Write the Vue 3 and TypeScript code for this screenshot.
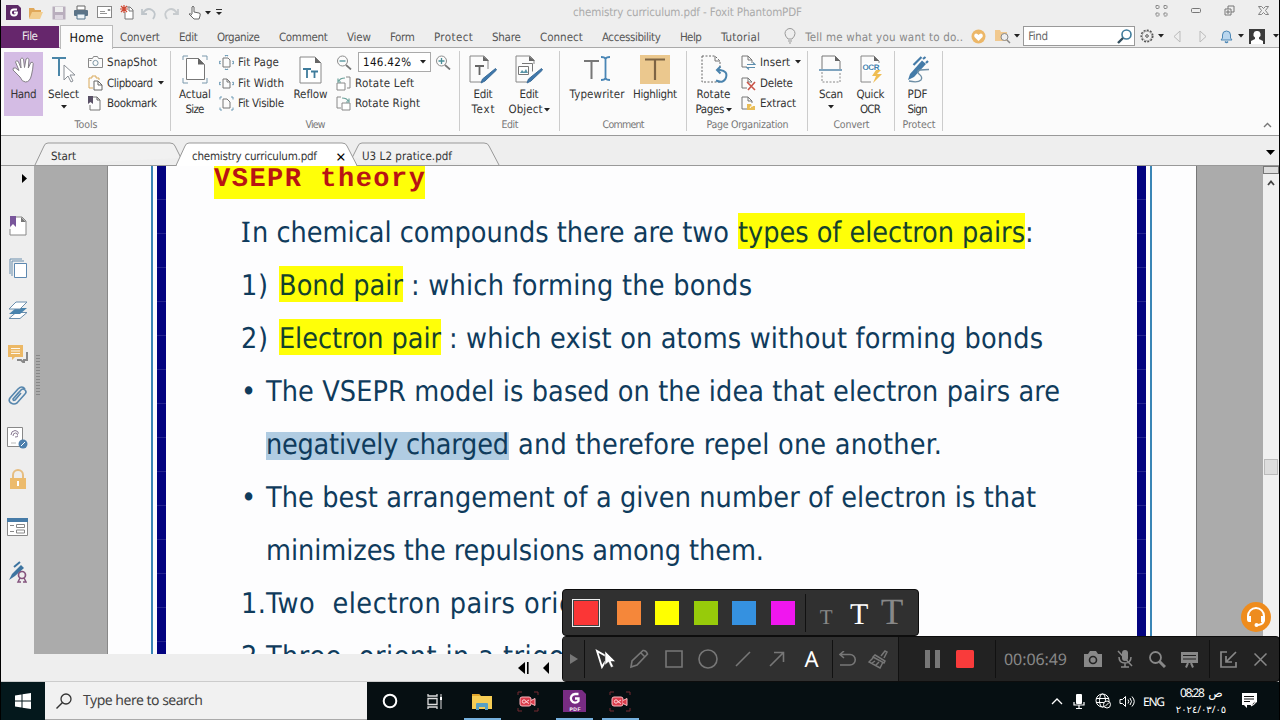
<script setup lang="ts">
import { h } from 'vue'

type IconDef = [number, number, string]

const icons: Record<string, IconDef> = {
  logo: [15, 15, '<path d="M0 0h12l3 3v12H0z" fill="#5d2a66"/><path d="M11 4.500H8a3 3 0 1 0 0 6q3 0 3-3H8" stroke="#fff" stroke-width="1.800"/>'],
  open: [16, 14, '<path d="M1 12V2h5l1 2h6v2" fill="#e0a85a"/><path d="M1 13L4 6h11l-3 7z" fill="#f2cd8e"/>'],
  save: [14, 14, '<path d="M.5.5h13v13H.5z" fill="#b9aebd"/><path d="M3 1h8v5H3z" fill="#eee"/><path d="M3 9h8v4H3z" fill="#ddd6e0"/>'],
  print: [16, 15, '<path d="M4 1h8v4H4z" fill="#fff" stroke="#666"/><rect x="1" y="5" width="14" height="6" rx="1" fill="#5b7387"/><path d="M4 9h8v5H4z" fill="#eef4f8" stroke="#54748c"/>'],
  mail: [16, 13, '<rect x=".5" y=".5" width="14" height="11" fill="#fff" stroke="#888"/><path d="M3 5.500h5M3 7.500h7M11 3.500h2v1h-2z" stroke="#888" stroke-width=".9"/>'],
  newdoc: [14, 15, '<path d="M5 7v7h8V5l-3-3H7" stroke="#777" fill="#fff"/><path d="M9 2v4h4" stroke="#777"/><path d="M4 0v8M0 4h8M1 1l6 6M7 1L1 7" stroke="#d04a35" stroke-width="1.200"/>'],
  undoQ: [15, 14, '<path d="M1 3v5h5M2 7q4-6 9-3t1 9" stroke="#bfc5ca" stroke-width="1.800"/>'],
  redoQ: [15, 14, '<path d="M14 3v5H9M13 7Q9 1 4 4t-1 9" stroke="#c7cbce" stroke-width="1.800"/>'],
  touch: [14, 15, '<path d="M4 9V2q1-1.500 2 0v5l5 1q2 0 1 3l-1 3H6L1 9q1-1 3 1" stroke="#666" fill="#fff"/>'],
  caret: [6, 4, '<path d="M0 0h6L3 3.500z" fill="#222"/>'],
  caretLine: [6, 7, '<path d="M0 .5h6" stroke="#333"/><path d="M0 3h6L3 6z" fill="#222"/>'],
  bigCaret: [9, 5, '<path d="M0 0h9L4.500 5z" fill="#000"/>'],
  bulb: [12, 16, '<path d="M4 11Q1 8 1 5.500a5 5 0 0 1 10 0Q11 8 8 11zM4 13h4M5 15h2" stroke="#999"/>'],
  heart: [15, 15, '<circle cx="7.500" cy="7.500" r="7" fill="#ecb768"/><path d="M7.500 12L3.500 8Q2.500 5 5 4.500q1.500 0 2.500 1.500Q8.500 4.500 10 4.500q2.500.5 1.500 3.500z" fill="#fff"/>'],
  folderFind: [16, 15, '<path d="M0 12V1h5l1 2h6v9z" fill="#f1c98f"/><circle cx="9.500" cy="8" r="3.500" fill="#eee" stroke="#888"/><path d="M12 11l3 3" stroke="#888" stroke-width="1.500"/>'],
  find: [15, 15, '<circle cx="9.500" cy="5.500" r="4.500" stroke="#3f7c9c" stroke-width="1.600"/><path d="M6 9l-5 5" stroke="#35505f" stroke-width="2.400"/>'],
  gear: [14, 14, '<circle cx="7" cy="7" r="5.800" stroke="#555" stroke-width="1.500" stroke-dasharray="2 1.300"/><circle cx="7" cy="7" r="4.800" stroke="#777" stroke-width=".6"/><circle cx="7" cy="7" r="1.300" stroke="#555"/>'],
  prev: [8, 13, '<path d="M7 1v11L1 6.500z" stroke="#bbb"/>'],
  next: [8, 13, '<path d="M1 1v11l6-5.500z" stroke="#bbb"/>'],
  bell: [13, 15, '<path d="M1 11h11l-1.500-2V6a4 4 0 0 0-8 0v3z" fill="#b9d6ee" stroke="#4d87b5"/><path d="M5 12.500q1.500 2 3 0" stroke="#4d87b5" stroke-width="1.300"/>'],
  user: [16, 15, '<path d="M0 0h16v15H0z" fill="#3b3b3b"/><path d="M8 2a3.300 3.500 0 0 1 2 6.500v1.500l4 2v3H2v-3l4-2V8.500A3.300 3.500 0 0 1 8 2z" fill="#fff"/>'],
  fullscreen: [13, 12, '<path d="M1 .5h3v3H1zM9 .5h3v3H9zM1 8h3v3H1zM9 8h3v3H9z" stroke="#888" stroke-dasharray="2.500 .7"/>'],
  min: [10, 5, '<rect x=".5" y=".5" width="9" height="4" rx="1" stroke="#777"/>'],
  restore: [11, 11, '<path d="M1 4h6v6H1zM4 4V1h6v6H7M3 6h2v2H3z" stroke="#777"/>'],
  close: [11, 9, '<path d="M.5.5h3l2 2 2-2h3l-3 4 3 4h-3l-2-2-2 2h-3l3-4z" stroke="#777" stroke-width=".9"/>'],
  hand: [25, 28, '<path d="M9 21L2 14q-.5-3 2.500-2L8 14.500 4.500 6q.8-2.300 2.800-.5L10 12 9.500 3q1.500-2.300 3 0l1 8.500L15 3q1.800-1.800 3 .3L17.300 12l2.500-5.500q2-1 2.400 1Q22 13 20.500 19q-1.500 7-6 7-3.500 0-5.500-5z" fill="#fff" stroke="#858088"/>'],
  select: [25, 28, '<path d="M1 2h14M8 2v18" stroke="#4a86a8" stroke-width="2"/><path d="M13 9v15l4-4 3 6 2-1-3-6h5z" fill="#fff" stroke="#8a8f96"/>'],
  snap: [15, 13, '<path d="M.5 2.500h4l1-2h4l1 2h4v9H.5z" stroke="#888"/><circle cx="7.500" cy="7" r="2.600" stroke="#7d97a5"/><path d="M1.500 4.500h2" stroke="#888"/>'],
  clip: [15, 16, '<path d="M5 13H1V3h3V1h4v2h3v2" stroke="#d9a95b"/><path d="M6 6h4l4 4v5H6z" fill="#fff" stroke="#666"/><path d="M10 6v4h4" stroke="#666"/>'],
  bmark: [13, 15, '<path d="M5 1h4l3 3v10H2V9" stroke="#777"/><path d="M9 1v3h3" stroke="#666"/><path d="M0 0h5v8L2.500 6 0 8z" fill="#595066"/>'],
  actual: [26, 29, '<path d="M4.500 3.500h12l6 6v15h-18z" fill="#fff" stroke="#777"/><path d="M16 3v6.500h6.500z" fill="#666"/><path d="M1 5V1h5M20 1h5v4M1 23v5h5M20 28h5v-5" stroke="#7a99ad"/>'],
  fitPage: [15, 15, '<path d="M4 3h5l2 2v7H4z" stroke="#777"/><path d="M6 1l1.500-1L9 1M6 14l1.500 1L9 14M1.500 6L0 7.500 1.500 9M13.500 6L15 7.500 13.500 9" stroke="#6d9ab5" stroke-width="1.300"/>'],
  fitWidth: [15, 15, '<path d="M4 3h4l3 3v6H4z" stroke="#777"/><path d="M8 3v3h3" stroke="#777"/><path d="M1.500 6L0 7.500 1.500 9M13.500 6L15 7.500 13.500 9" stroke="#6d9ab5" stroke-width="1.300"/>'],
  fitVis: [15, 15, '<path d="M4 3h4l3 3v6H4z" stroke="#777"/><path d="M1 3.500V1h2M12 1h2v2.500M1 11.500V14h2M12 14h2v-2.500" stroke="#6d9ab5"/>'],
  reflow: [23, 28, '<path d="M1 1h15l6 6v20H1z" fill="#fff" stroke="#888"/><path d="M16 1v6h6z" fill="#666"/><path d="M4 13h8M8 13v9M12 15.500h7M15.500 15.500V22" stroke="#3f7c9c" stroke-width="1.800"/>'],
  zoomOut: [16, 15, '<circle cx="6.500" cy="6" r="5" stroke="#8c8c8c"/><path d="M10 10l5 4.500" stroke="#777" stroke-width="1.700"/><path d="M3.500 6h6" stroke="#4b8f98" stroke-width="1.300"/>'],
  zoomIn: [16, 15, '<circle cx="6.500" cy="6" r="5" stroke="#8c8c8c"/><path d="M10 10l5 4.500" stroke="#777" stroke-width="1.700"/><path d="M3.500 6h6M6.500 3v6" stroke="#4b8f98" stroke-width="1.300"/>'],
  rotL: [15, 15, '<path d="M1 7h8v7H1z" fill="#fff" stroke="#888"/><path d="M10 1h4v11h-3" stroke="#888"/><path d="M3 5q1-3 6-3M2 2.500V6h3" stroke="#6aa09a" stroke-width="1.200"/>'],
  rotR: [15, 15, '<path d="M6 7h8v7H6z" fill="#fff" stroke="#888"/><path d="M5 12H1V1h4" stroke="#888"/><path d="M12 5q-1-3-6-3M13 2.500V6h-3" stroke="#6aa09a" stroke-width="1.200"/>'],
  editText: [28, 29, '<path d="M12 27H1V1h14l4 4v9" stroke="#888"/><path d="M14 1v5h6z" fill="#666"/><path d="M6 11h9M10.500 11v9" stroke="#666" stroke-width="1.800"/><path d="M26.500 13.500l1 1.500L16 26l-4 2 1.500-4z" fill="#3d78ad" stroke="#3d6c97"/>'],
  editObj: [28, 29, '<path d="M12 27H1V1h14l4 4v4" stroke="#888"/><path d="M14 1v5h6z" fill="#666"/><path d="M7 8.500h10.500v8" stroke="#777"/><path d="M3.500 11.500h10v8h-10z" fill="#fff" stroke="#777"/><path d="M5 18l2-3 2 2 2-3 2 4z" fill="#5b96a8"/><path d="M26.500 13.500l1 1.500L16 26l-4 2 1.500-4z" fill="#3d78ad" stroke="#3d6c97"/>'],
  typew: [27, 27, '<path d="M0 5h15M7.500 5v18" stroke="#777" stroke-width="2"/><path d="M17 1q4 0 4.500 2Q22 1 26 1M21.500 2v21M17 24q4 0 4.500-2 .5 2 4.500 2" stroke="#4a86b5" stroke-width="1.800"/>'],
  high: [30, 29, '<path d="M0 0h30v29H0z" fill="#ebc88e"/><path d="M5 4.500h20M15 4.500V25" stroke="#7d6444" stroke-width="2.200"/>'],
  rotPages: [28, 29, '<path d="M2 1h13l5 5v6M2 1v26h18" stroke="#666" stroke-dasharray="2 1.500"/><path d="M15 1v5h5" stroke="#777"/><path d="M16 25.500q8 3.500 10-3t-6-7.500h-3M20.500 11.500L17 15l3.500 3.500" stroke="#4a83ad" stroke-width="2"/>'],
  insert: [15, 15, '<path d="M6 12H1V1h6l4 4v3M7 1v4h4" stroke="#777"/><path d="M6 9.500h8l-2-2M14 12.500H6l2 2" stroke="#5d8eae" stroke-width="1.200"/>'],
  del: [15, 15, '<path d="M6 12H1V2h6l4 4M7 2v4h4" stroke="#777"/><path d="M6 6l8 8M14 6l-7 8" stroke="#c95448" stroke-width="1.600"/>'],
  extract: [15, 15, '<path d="M6 13H1V1h6l4 4v2M7 1v4h4" stroke="#777"/><path d="M6 14V8h4l1 2h3v4z" fill="#e9bd57"/><path d="M9 12q1-3 3-2" stroke="#fff"/>'],
  scan: [24, 29, '<path d="M3 14V1h13l5 5v8" stroke="#777"/><path d="M16 1v5h5z" fill="#666"/><path d="M0 15h23" stroke="#4a7fa5" stroke-width="1.400"/><path d="M3 17v10h18V17" stroke="#888" stroke-dasharray="2 1.500"/>'],
  ocr: [24, 29, '<path d="M12 27H2V1h13l5 5v8" stroke="#888"/><path d="M15 1v5h5z" fill="#666"/><rect x="3" y="8" width="18" height="8" fill="#fff"/><text x="3.500" y="15" font-family="Liberation Sans, sans-serif" font-weight="bold" font-size="8" fill="#3f7fae" textLength="17">OCR</text><path d="M17 15l-4 6h4l-3 7 9-9h-5l4-4z" fill="#efbd52"/>'],
  sign: [26, 29, '<path d="M17 5.500l4 3.500L9 22l-6 3 2-6z" fill="#447ba8"/><path d="M8.500 10l8-8M18 4l2.500-2M21 8l2-2" stroke="#447ba8" stroke-width="2.200"/><path d="M4 26q9 2 12-1 2-3-2-6-3-3 1-4 4-.500 9-.500" stroke="#6d8ea5" stroke-width="1.300"/>'],
  collapse: [9, 6, '<path d="M1 5l3.500-3.500L8 5" stroke="#777" stroke-width="1.400"/>'],
  play: [5, 9, '<path d="M0 0v9l5-4.500z" fill="#000"/>'],
  sBook: [18, 20, '<path d="M7 1h6l4 4v14H1v-6" fill="#fff" stroke="#888"/><path d="M12 1v5h5z" fill="#777"/><path d="M1 0h6v11l-3-3-3 3z" fill="#79569b"/>'],
  sPages: [18, 20, '<path d="M1 16V1h12M3 18V3h12" stroke="#6b8fae"/><path d="M5.500 5.500h12v14h-12z" fill="#fff" stroke="#5d88b0"/>'],
  sLayers: [22, 19, '<path d="M2 17.500h11l7-6H9z" fill="#fff" stroke="#6b8fae"/><path d="M2 13h11l7-6H9z" fill="#4983ad"/><path d="M2 8h11l7-7H9z" fill="#fff" stroke="#6b8fae"/>'],
  sChat: [20, 19, '<path d="M19 8v8h-3v3l-3-3H9" stroke="#888" stroke-width="2"/><path d="M0 1h15v12H7l-3 3v-3H0z" fill="#ecb865"/><path d="M3 4.500h9M3 7h9M3 9.500h9" stroke="#fff" stroke-width=".9"/>'],
  sClip: [20, 20, '<path d="M6 13l7-8q2-2 4 0t0 4l-8 9q-3 2-6 0t-1-5l8-9q4-4 7 0M13 8l-6 7q-2 1-2-1l6-7" stroke="#5686ad" stroke-width="1.600"/>'],
  sSig: [21, 22, '<path d="M.5.5h15v19H.5z" fill="#fff" stroke="#888"/><path d="M4 8q0-4 4-4.500 3.500.500 3.500 3M6 9q0-3 2.500-3t2 2.500M8 10q3 0 3-1" stroke="#8a7b94"/><path d="M4 16h5" stroke="#bbb"/><circle cx="16" cy="17" r="4.500" fill="#4c7fad"/><path d="M14 19l4-4" stroke="#fff"/>'],
  sLock: [18, 21, '<path d="M4 10V6a5 5 0 0 1 10 0v4" stroke="#e6bd80" stroke-width="2"/><path d="M1 9h16v11H1z" fill="#ecbb6d"/><path d="M9 12v5" stroke="#fff" stroke-width="2"/>'],
  sForm: [21, 18, '<path d="M.5.5h20v17H.5z" fill="#fff" stroke="#888"/><path d="M0 0h21v4H0z" fill="#467ba7"/><path d="M3 7.500h4M3 13.500h4M9.500 6.500h8v3h-8zM9.500 12h8v3h-8z" stroke="#888"/>'],
  sSign: [19, 22, '<path d="M1 19l3-6 9-9 3 3-9 8z" fill="#3d74a0"/><path d="M6 6l6-5" stroke="#3d74a0" stroke-width="2"/><circle cx="14" cy="14" r="3.500" stroke="#84547d" stroke-width="1.700"/><path d="M12 17l-2 4h3M16 17l2 4h-3" stroke="#84547d" stroke-width="1.500"/>'],
  up: [8, 6, '<path d="M1 5l3-3.500L7 5" stroke="#444" stroke-width="1.800"/>'],
  first: [11, 12, '<path d="M7 0v12L0 6z" fill="#000"/><path d="M9.800 0v12" stroke="#000" stroke-width="1.600"/>'],
  back: [6, 12, '<path d="M6 0v12L0 6z" fill="#000"/>'],
  headset: [30, 30, '<circle cx="15" cy="15" r="15" fill="#ee8c1e"/><path d="M7 18v-4a8 8 0 0 1 16 0v4q0 4-6 5" stroke="#fff" stroke-width="2"/><path d="M6 14h4v6H8q-2 0-2-3zM20 14h4v3q0 3-2 3h-2z" fill="#fff"/><circle cx="15.500" cy="23" r="2" fill="#fff"/>'],
  rPlay: [8, 10, '<path d="M0 0v10l8-5z" fill="#777"/>'],
  rCursor: [20, 20, '<path d="M2 2l5 16 3-5 6-3z" stroke="#fff" stroke-width="1.800"/><path d="M10 2v14l3.500-3 2.500 5.500 2.500-1L16 12.500h4.500z" fill="#fff" stroke="#333" stroke-width=".5"/>'],
  rPencil: [22, 20, '<path d="M2 18l1-6L14 1.500q3-.5 4.500 3.500L8 16zM12 4l4 4" stroke="#777" stroke-width="1.600"/>'],
  rRect: [18, 18, '<path d="M1 1h16v16H1z" stroke="#777" stroke-width="1.600"/>'],
  rCircle: [20, 20, '<circle cx="10" cy="10" r="9" stroke="#777" stroke-width="1.600"/>'],
  rLine: [16, 16, '<path d="M1 15L15 1" stroke="#777" stroke-width="1.600"/>'],
  rArrow: [16, 16, '<path d="M1 15L14.500 1.500M5 1.500h9.500V11" stroke="#777" stroke-width="1.600"/>'],
  rUndo: [18, 16, '<path d="M5 0L1 3.500 5 7M1 3.500h10a5 5 0 0 1 0 10.500H1" stroke="#777" stroke-width="1.600"/>'],
  rBrush: [20, 19, '<path d="M13 6l4-5 2 1-3 6M7 5l10 6-1 2L5 7zM5 8l-4 4 11 6 3-6M4 13l3-2M8 15l3-3" stroke="#777" stroke-width="1.500"/>'],
  rPause: [16, 18, '<path d="M0 0h5v18H0zM10 0h5v18h-5z" fill="#777"/>'],
  rStop: [18, 18, '<rect width="18" height="18" rx="1.500" fill="#f93b3b"/>'],
  rCam: [18, 16, '<path d="M0 3h4l2-3h6l2 3h4v13H0z" fill="#888"/><circle cx="9" cy="9" r="3.500" stroke="#222" stroke-width="1.600"/>'],
  rMic: [16, 18, '<rect x="5" y="0" width="6" height="11" rx="3" fill="#888"/><path d="M2 7q0 6 6 6t6-6M8 13v4M4 17h8M1 1l14 15" stroke="#888" stroke-width="1.500"/>'],
  rFind: [17, 17, '<circle cx="6.500" cy="6.500" r="5.500" stroke="#888" stroke-width="1.800"/><path d="M10 10l6 6" stroke="#888" stroke-width="3"/>'],
  rBoard: [17, 17, '<path d="M0 1h17v11H0z" fill="#888"/><path d="M2 4.500h13M2 8h13" stroke="#222" stroke-width="1.200"/><path d="M5 16.500l2-4.500M12 16.500L10 12" stroke="#888" stroke-width="2"/>'],
  rExport: [17, 17, '<path d="M7 1H1v15h15v-5M16 1L6.500 10.500M6 5v6h6" stroke="#888" stroke-width="1.700"/>'],
  rClose: [13, 13, '<path d="M.5.500l12 12M12.500.5l-12 12" stroke="#888" stroke-width="1.500"/>'],
  win: [16, 16, '<path d="M0 2.500l6.500-1v6H0zM7.500 1.300L16 0v7.500H7.500zM0 8.500h6.500v6l-6.500-1zM7.500 8.500H16V16l-8.500-1.300z" fill="#fff"/>'],
  search: [16, 16, '<circle cx="10" cy="6" r="5" stroke="#333" stroke-width="1.300"/><path d="M6.500 9.500L.5 15.500" stroke="#333" stroke-width="1.400"/>'],
  cortana: [16, 16, '<circle cx="8" cy="8" r="6.300" stroke="#fff" stroke-width="2"/>'],
  taskview: [16, 15, '<path d="M1 0v2h9V0M1 15v-2h9v2M1 4.500h9v6H1z" stroke="#ddd" stroke-width="1.300"/><path d="M14 0v15" stroke="#ddd"/><path d="M13 3h2v3h-2z" fill="#fff"/>'],
  folder: [20, 17, '<path d="M0 1h7l2 2h11v13H0z" fill="#f6cd55"/><path d="M0 1h7l1 2H0z" fill="#e0a52c"/><path d="M4 17v-6q0-1 1-1h10q1 0 1 1v6h-3v-3H7v3z" fill="#58a0c4"/>'],
  rec: [22, 21, '<path d="M1 4V1h4M17 1h4v3M1 17v3h4M17 20h4v-3" stroke="#742a31"/><rect x="3" y="6" width="11" height="9" rx="2" fill="#d93d4c" stroke="#ffb9bf"/><path d="M14 9.500l4-2v7l-4-2" fill="#d93d4c" stroke="#ffb9bf"/><circle cx="7" cy="10.500" r="1.700" stroke="#ffd5d8"/><path d="M12 9l-3 1.800 3 1.700" stroke="#ffd5d8"/>'],
  foxit: [23, 22, '<path d="M0 0h19l4 4v18H0z" fill="#782c83"/><path d="M15.500 4h-3.500a4.300 4.300 0 1 0 3.500 7V8.500H12" stroke="#fff" stroke-width="2.300"/><text x="6.500" y="20.500" font-family="Liberation Sans, sans-serif" font-weight="bold" font-size="5" fill="#fff" textLength="11">PDF</text>'],
  tUp: [12, 7, '<path d="M1 6l5-5 5 5" stroke="#fff" stroke-width="1.300"/>'],
  tMic: [12, 15, '<rect x="3" y="0" width="6" height="10" rx="1" fill="#fff"/><path d="M1 8v3h10V8M6 11v3M3 14.500h6" stroke="#fff" stroke-width="1.200"/>'],
  tGlobe: [17, 16, '<circle cx="7.500" cy="7.500" r="6.500" stroke="#fff"/><ellipse cx="7.500" cy="7.500" rx="3" ry="6.500" stroke="#fff"/><path d="M1 5.500h13M1 9.500h13" stroke="#fff"/><circle cx="12" cy="11.500" r="3.500" fill="#091012" stroke="#fff"/><path d="M10 13.500l4-4" stroke="#fff"/>'],
  tVol: [16, 13, '<path d="M1 4.500h2.500l3-3v10l-3-3H1z" stroke="#fff"/><path d="M9 4.500q1.500 2 0 4M11 3q3 3.500 0 7M13 1.500q4.500 5 0 10" stroke="#fff"/>'],
  tNote: [17, 16, '<path d="M1 0h15v9l-4 3H6v3l-3-3H1z" fill="#fff"/><path d="M3 3.500h10M3 6h10M3 8.500h6" stroke="#111"/><path d="M10 13q2-4 5-5-1 4-5 5" stroke="#fff" fill="#111"/>'],
}

const Icon = (p: { name: string }) => {
  const [w, ht, body] = icons[p.name]
  return h('svg', { width: w, height: ht, viewBox: `0 0 ${w} ${ht}`, fill: 'none', innerHTML: body })
}
Icon.props = ['name']

/* Tracks a label so that it spans the given width. */
const vFit = {
  mounted(el: HTMLElement, { value }: { value: number }) {
    const n = (el.textContent ?? '').length
    const natural = el.getBoundingClientRect().width
    if (n > 1) el.style.letterSpacing = `${(value - natural) / (n - 1)}px`
    el.style.width = `${value}px`
  },
}

type Label = [string, number]
interface Big { icon: string; w: number; lines: Label[]; caret?: 'below' | 'after'; on?: boolean }
interface Small { icon: string; label: Label; caret?: boolean }

const menu: Label[] = [
  ['Convert', 40], ['Edit', 19], ['Organize', 43], ['Comment', 49], ['View', 24], ['Form', 25],
  ['Protect', 39], ['Share', 29], ['Connect', 43], ['Accessibility', 59], ['Help', 22], ['Tutorial', 39],
]
const quick = ['logo', 'open', 'save', 'print', 'mail', 'newdoc', 'undoQ', 'redoQ']

const hand: Big = { icon: 'hand', w: 39, lines: [['Hand', 26]], on: true }
const select: Big = { icon: 'select', w: 41, lines: [['Select', 31]], caret: 'below' }
const tools: Small[] = [
  { icon: 'snap', label: ['SnapShot', 50] },
  { icon: 'clip', label: ['Clipboard', 46], caret: true },
  { icon: 'bmark', label: ['Bookmark', 50] },
]
const actual: Big = { icon: 'actual', w: 40, lines: [['Actual', 32], ['Size', 19]] }
const fits: Small[] = [
  { icon: 'fitPage', label: ['Fit Page', 41] },
  { icon: 'fitWidth', label: ['Fit Width', 46] },
  { icon: 'fitVis', label: ['Fit Visible', 46] },
]
const reflow: Big = { icon: 'reflow', w: 41, lines: [['Reflow', 34]] }
const rotates: Small[] = [
  { icon: 'rotL', label: ['Rotate Left', 59] },
  { icon: 'rotR', label: ['Rotate Right', 65] },
]
const edits: Big[] = [
  { icon: 'editText', w: 46, lines: [['Edit', 19], ['Text', 23]] },
  { icon: 'editObj', w: 46, lines: [['Edit', 19], ['Object', 34]], caret: 'after' },
]
const comments: Big[] = [
  { icon: 'typew', w: 62, lines: [['Typewriter', 55]] },
  { icon: 'high', w: 54, lines: [['Highlight', 44]] },
]
const rotPages: Big = { icon: 'rotPages', w: 41, lines: [['Rotate', 34], ['Pages', 29]], caret: 'after' }
const pageOps: Small[] = [
  { icon: 'insert', label: ['Insert', 30], caret: true },
  { icon: 'del', label: ['Delete', 33] },
  { icon: 'extract', label: ['Extract', 36] },
]
const converts: Big[] = [
  { icon: 'scan', w: 40, lines: [['Scan', 24]], caret: 'below' },
  { icon: 'ocr', w: 39, lines: [['Quick', 28], ['OCR', 21]] },
]
const signs: Big[] = [{ icon: 'sign', w: 45, lines: [['PDF', 20], ['Sign', 20]] }]

interface Group { name: Label; w: number; pad: number; parts: (Big | Small[] | 'zoom')[] }
const groups: Group[] = [
  { name: ['Tools', 23], w: 170, pad: 3, parts: [hand, select, tools] },
  { name: ['View', 20], w: 289, pad: 4, parts: [actual, fits, reflow, 'zoom'] },
  { name: ['Edit', 17], w: 100, pad: 0, parts: edits },
  { name: ['Comment', 42], w: 127, pad: 6, parts: comments },
  { name: ['Page Organization', 82], w: 121, pad: 6, parts: [rotPages, pageOps] },
  { name: ['Convert', 36], w: 87, pad: 3, parts: converts },
  { name: ['Protect', 33], w: 48, pad: 0, parts: signs },
]
const isBig = (p: Big | Small[] | 'zoom'): p is Big => typeof p === 'object' && !Array.isArray(p)

const side = ['sBook', 'sPages', 'sLayers', 'sChat', 'sClip', 'sSig', 'sLock', 'sForm', 'sSign']

type Seg = { t: string; w: number; gap?: number; mark?: 'hl' | 'sel' | 'slab' }
const lines: Seg[][] = [
  [{ t: 'I', w: 11, mark: 'slab' }, { t: 'n chemical compounds there are two', w: 477 }, { t: 'types of electron pairs', w: 287, gap: 9, mark: 'hl' }, { t: ':', w: 9 }],
  [{ t: '1)', w: 27 }, { t: 'Bond pair', w: 124, gap: 11, mark: 'hl' }, { t: ': which forming the bonds', w: 341, gap: 8 }],
  [{ t: '2)', w: 27 }, { t: 'Electron pair', w: 162, gap: 11, mark: 'hl' }, { t: ': which exist on atoms without forming bonds', w: 594, gap: 8 }],
  [{ t: '•', w: 13 }, { t: 'The VSEPR model is based on the idea that electron pairs are', w: 794, gap: 12 }],
  [{ t: 'negatively charged', w: 243, gap: 25, mark: 'sel' }, { t: 'and therefore repel one another.', w: 424, gap: 9 }],
  [{ t: '•', w: 13 }, { t: 'The best arrangement of a given number of electron is that', w: 770, gap: 12 }],
  [{ t: 'minimizes the repulsions among them.', w: 498, gap: 25 }],
  [{ t: '1.', w: 25 }, { t: 'Two  electron pairs orient', w: 336 }],
  [{ t: '2.', w: 25 }, { t: 'Three  orient in a trigonal', w: 339 }],
]

const swatches = ['orange', 'yellow', 'green', 'blue', 'magenta']
const draw = ['rCursor', 'rPencil', 'rRect', 'rCircle', 'rLine', 'rArrow']
const apps = [['folder', true], ['rec', false], ['foxit', true], ['rec', true]] as [string, boolean][]
</script>

<template>
  <div class="screen">
    <header class="title">
      <div class="quick">
        <Icon v-for="q in quick" :key="q" :name="q" />
        <Icon name="touch" class="touch" /><Icon name="caret" class="c1" /><Icon name="caretLine" class="c2" />
      </div>
      <span v-fit="229" class="caption">chemistry curriculum.pdf - Foxit PhantomPDF</span>
      <div class="winbtns"><Icon name="fullscreen" /><Icon name="min" /><Icon name="restore" /><Icon name="close" /></div>
    </header>

    <nav class="menu">
      <div class="file"><span v-fit="16">File</span></div>
      <div class="home"><span v-fit="34">Home</span></div>
      <div class="items"><span v-for="m in menu" :key="m[0]" v-fit="m[1]">{{ m[0] }}</span></div>
      <Icon name="bulb" class="bulb" />
      <span v-fit="158" class="tell">Tell me what you want to do..</span>
      <Icon name="heart" class="heart" /><Icon name="folderFind" class="ff" /><Icon name="caret" class="fc" />
      <div class="find"><span v-fit="20">Find</span><Icon name="find" /></div>
      <Icon name="gear" class="gear" /><Icon name="caret" class="gc" />
      <Icon name="prev" class="prev" /><Icon name="next" class="next" />
      <Icon name="bell" class="bell" /><Icon name="caret" class="bc" />
      <Icon name="user" class="user" /><Icon name="caret" class="uc" />
    </nav>

    <section class="ribbon">
      <div v-for="g in groups" :key="g.name[0]" class="group" :style="{ width: g.w + 'px' }">
        <div class="parts" :style="{ paddingLeft: g.pad + 'px' }">
          <template v-for="(p, i) in g.parts" :key="i">
            <div v-if="isBig(p)" class="big" :class="{ on: p.on }" :style="{ width: p.w + 'px' }">
              <div class="pic"><Icon :name="p.icon" /></div>
              <div v-for="(l, k) in p.lines" :key="k" class="ln">
                <span v-fit="l[1]">{{ l[0] }}</span><Icon v-if="p.caret === 'after' && k === 1" name="caret" />
              </div>
              <Icon v-if="p.caret === 'below'" name="caret" class="below" />
            </div>
            <div v-else-if="p === 'zoom'" class="stack zoom">
              <div class="row">
                <Icon name="zoomOut" />
                <div class="pct"><span v-fit="48">146.42%</span><Icon name="caret" /></div>
                <Icon name="zoomIn" />
              </div>
              <div v-for="s in rotates" :key="s.icon" class="row"><div class="si"><Icon :name="s.icon" /></div><span v-fit="s.label[1]">{{ s.label[0] }}</span></div>
            </div>
            <div v-else class="stack" :class="{ wide: p === fits, ops: p === pageOps }">
              <div v-for="s in p" :key="s.icon" class="row">
                <div class="si"><Icon :name="s.icon" /></div>
                <span v-fit="s.label[1]">{{ s.label[0] }}</span>
                <Icon v-if="s.caret" name="caret" class="rc" />
              </div>
            </div>
          </template>
        </div>
        <div class="gname"><span v-fit="g.name[1]">{{ g.name[0] }}</span></div>
      </div>
      <Icon name="collapse" class="collapse" />
    </section>

    <div class="tabs">
      <svg class="shapes" width="1278" height="30" fill="none" stroke="#999">
        <path d="M34 29L43 10q1-3 4-3h122q4 0 5 3l6 12" fill="#f1f1f1" />
        <path d="M351 22l6-12q1-3 4-3h122q4 0 5 3l10 19" fill="#f1f1f1" />
        <path d="M0 29.500h1278" />
        <path d="M175 29.500L184 10q1-3 4-3h153q4 0 5 3l10 19.500" fill="#fff" />
        <path d="M176 29.500h179" stroke="#fff" />
      </svg>
      <span v-fit="25" class="t1">Start</span>
      <span v-fit="125" class="t2">chemistry curriculum.pdf</span>
      <span class="tx">×</span>
      <span v-fit="90" class="t3">U3 L2 pratice.pdf</span>
      <Icon name="bigCaret" class="tc" />
    </div>

    <main class="body">
      <aside class="side">
        <Icon name="play" class="play" />
        <div v-for="s in side" :key="s" class="scell"><Icon :name="s" /></div>
      </aside>
      <div class="gutter"><div class="grip"></div></div>
      <article class="sheet">
        <div class="thin left"></div><div class="thick"></div>
        <div class="content">
          <h1><span v-fit="211">VSEPR theory</span></h1>
          <p v-for="(l, i) in lines" :key="i">
            <span v-for="(s, k) in l" :key="k" v-fit="s.w" :class="s.mark" :style="{ marginLeft: (s.gap ?? 0) + 'px' }">{{ s.t }}</span>
          </p>
        </div>
        <div class="thick"></div><div class="thin right"></div>
      </article>
      <div class="rest"></div>
      <div class="scroll"><div class="split"></div><Icon name="up" /><div class="thumb"></div></div>
    </main>

    <footer class="status"><Icon name="first" /><Icon name="back" /></footer>

    <div class="taskbar">
      <div class="start"><Icon name="win" /></div>
      <div class="tsearch"><Icon name="search" /><span v-fit="120">Type here to search</span></div>
      <div class="app sm"><Icon name="cortana" /></div>
      <div class="app sm"><Icon name="taskview" /></div>
      <div class="running"><div v-for="(a, i) in apps" :key="i" class="app" :class="{ run: a[1] }"><Icon :name="a[0]" /></div></div>
      <div class="tray">
        <Icon name="tUp" /><Icon name="tMic" /><Icon name="tGlobe" /><Icon name="tVol" />
        <span v-fit="22" class="eng">ENG</span>
        <div class="clock"><div class="time"><span v-fit="25">08:28</span><span>ص</span></div><div class="date">٢٠٢٤/٠٣/٠٥</div></div>
        <Icon name="tNote" />
      </div>
    </div>

    <div class="help"><Icon name="headset" /></div>

    <div class="palette">
      <div class="sw red"></div>
      <div v-for="s in swatches" :key="s" class="sw" :class="s"></div>
      <i class="div"></i>
      <span class="ts s">T</span><span class="ts m">T</span><span class="ts l">T</span>
    </div>
    <div class="recorder">
      <div class="rleft">
        <div class="rp"><Icon name="rPlay" /></div><i class="div"></i>
        <div class="rtools">
          <div v-for="d in draw" :key="d" class="rcell"><Icon :name="d" /></div>
          <div class="rcell letter">A</div>
        </div>
        <i class="div"></i>
        <div class="rsm"><Icon name="rUndo" /></div><div class="rsm"><Icon name="rBrush" /></div>
      </div>
      <div class="rright">
        <div class="r32"><Icon name="rPause" /></div><div class="r32"><Icon name="rStop" /></div>
        <i class="div d1"></i>
        <span v-fit="63" class="timer">00:06:49</span>
        <div v-for="n in ['rCam', 'rMic', 'rFind', 'rBoard']" :key="n" class="r32"><Icon :name="n" /></div>
        <i class="div d2"></i>
        <div class="r32"><Icon name="rExport" /></div><div class="r32"><Icon name="rClose" /></div>
      </div>
    </div>
  </div>
</template>

<style>
html, body { margin: 0; background: #000; overflow: hidden; }
</style>

<style scoped>
.screen {
  position: relative; box-sizing: border-box; width: 1280px; height: 720px; overflow: hidden;
  border: solid #000; border-width: 0 1px; background: #eee; color: #333;
  font: 11.500px/15px "DejaVu Sans Condensed", "Noto Sans", sans-serif; text-rendering: geometricPrecision;
  display: flex; flex-direction: column;
}
.screen span { white-space: pre; display: inline-block; flex: none; }
svg { display: block; flex: none; }

.title { height: 25px; display: flex; align-items: center; flex: none; }
.quick { display: flex; align-items: center; gap: 7.400px; padding-left: 5px; width: 566px; }
.quick .touch { margin-left: 2px; }
.quick .c1 { margin-left: -5px; }
.quick .c2 { margin-left: -2px; }
.caption { color: #aaa; margin-left: 1px; }
.winbtns { margin-left: auto; display: flex; align-items: center; gap: 23px; padding: 0 10px 4px 0; }

.menu { height: 22px; flex: none; display: flex; align-items: center; border-bottom: 1px solid #aaa; color: #555; }
.file { width: 58px; height: 22px; margin-top: 1px; background: #66266c; color: #eee; display: flex; align-items: center; justify-content: center; }
.home { box-sizing: border-box; width: 53px; height: 24px; margin: 1px 0 0 1px; background: #fbfbfb; border: 1px solid #bbb; border-bottom: 0; color: #111; font-size: 12.500px; display: flex; align-items: center; justify-content: center; position: relative; z-index: 1; }
.items { display: flex; gap: 19px; margin-left: 7px; width: 664px; padding-top: 2px; }
.bulb { margin-left: 1px; }
.tell { margin: 2px 0 0 9px; color: #888; }
.heart { margin-left: 8px; }
.ff { margin-left: 9px; }
.fc { margin-left: 3px; }
.find { box-sizing: border-box; width: 112px; height: 20px; margin-left: 3px; background: #fff; border: 1px solid #999; padding: 0 2px 0 4px; display: flex; justify-content: space-between; align-items: center; color: #666; }
.gear { margin-left: 5px; }
.gc { margin-left: 4px; }
.prev { margin-left: 9px; }
.next { margin-left: 18px; }
.bell { margin-left: 13px; }
.bc { margin-left: 5px; }
.user { margin-left: 5px; }
.uc { margin-left: 8px; }

.ribbon { position: relative; height: 87px; flex: none; display: flex; background: #fbfbfb; border-bottom: 1px solid #999; }
.group { position: relative; box-sizing: border-box; height: 87px; padding-top: 4px; flex: none; }
.group::after { content: ""; position: absolute; right: 0; top: 3px; bottom: 4px; width: 1px; background: #ccc; }
.parts { display: flex; height: 66px; align-items: flex-start; }
.big { height: 64px; display: flex; flex-direction: column; align-items: center; flex: none; }
.big.on { background: #d4bce4; }
.pic { height: 35px; display: flex; align-items: center; justify-content: center; flex: none; }
.ln { height: 15px; display: flex; align-items: center; justify-content: center; gap: 1px; }
.below { margin-top: 3px; }
.stack { margin-left: 4px; display: flex; flex-direction: column; }
.stack.wide { width: 71px; margin-left: 4px; }
.stack.ops { margin-left: 7px; }
.stack.zoom { margin-left: 5px; }
.row { height: 20.800px; display: flex; align-items: center; }
.si { width: 19px; flex: none; }
.stack.ops .si { width: 19px; }
.rc { margin-left: 5px; }
.zoom .row:first-child svg:last-child { margin-left: 4px; }
.pct { box-sizing: border-box; width: 73px; height: 20px; margin-left: 6px; border: 1px solid #aaa; background: #fff; display: flex; align-items: center; justify-content: space-between; padding: 0 4px; color: #111; }
.pct svg, .zoom .row:first-child .pct svg { margin: 0; }
.gname { display: flex; justify-content: center; color: #777; font-size: 10.500px; }
.collapse { position: absolute; right: 7px; bottom: 7px; }

.tabs { position: relative; height: 30px; flex: none; display: flex; align-items: center; }
.tabs > span, .tabs > .tc { position: relative; top: 5px; }
.shapes { position: absolute; left: 0; top: 0; }
.t1 { margin-left: 50px; }
.t2 { margin-left: 116px; }
.tx { width: 12px; margin-left: 19px; font: 17px/15px "Noto Sans", sans-serif; color: #000; }
.t3 { margin-left: 14px; }
.tabs > .tc { margin-left: auto; margin-right: 4px; top: 1px; }

.body { height: 488px; flex: none; display: flex; overflow: hidden; }
.side { width: 33px; display: flex; flex-direction: column; align-items: center; }
.play { margin: 8px 0 22px 13px; flex: none; }
.scell { height: 42.300px; width: 33px; display: flex; align-items: center; justify-content: center; flex: none; }
.scell:nth-last-child(2) { margin-top: 5px; }
.scell:last-child { margin-top: 2px; }
.gutter { box-sizing: border-box; width: 74px; background: #ababab; border-right: 1px solid #888; padding: 189px 0 0 2px; }
.grip { width: 4px; height: 41px; background: repeating-linear-gradient(#888 0 1px, #ababab 1px 3px); }
.sheet { width: 1088px; background: #fdfdfe; display: flex; overflow: hidden; }
.thin { width: 2px; background: #3b86b6; flex: none; }
.thin.left { margin: 0 4px 0 43px; }
.thin.right { margin-left: 4px; }
.thick { width: 9px; flex: none; background: repeating-linear-gradient(#030380 0 33px, #24248f 33px 34px); }
.content { width: 971px; flex: none; }
.content h1 { margin: 0 0 10px 48px; height: 29.500px; font: bold 27px/29px "Liberation Mono", monospace; color: #b81414; }
.content h1 span { background: #ffff08; height: 33px; margin-top: -3px; }
.content p { margin: 0; padding-left: 75px; height: 53px; font-size: 28.500px; line-height: 53px; color: #0f3b5c; display: flex; align-items: baseline; }
.content .hl { line-height: 32px; padding-top: 4px; background: #ffff08; color: #14422c; }
.content .sel { line-height: 32px; background: linear-gradient(transparent 3px, #b0cce2 3px, #b0cce2 31px, transparent 31px); }
.content .slab { font-family: "Noto Sans", sans-serif; line-height: 40px; }
.rest { width: 67px; background: #ababab; border-left: 1px solid #777; box-sizing: border-box; }
.scroll { flex: 1; background: #f0f0f0; display: flex; flex-direction: column; align-items: center; }
.split { box-sizing: border-box; width: 16px; height: 8px; border: 1px solid #777; background: #ddd; margin-bottom: 6px; }
.thumb { box-sizing: border-box; width: 14px; height: 16px; margin-top: 273px; background: #ddd; border: 1px solid #bbb; }

.status { height: 28px; flex: none; box-sizing: border-box; display: flex; align-items: center; gap: 14px; padding-left: 517px; border-bottom: 1px solid #ccc; }

.taskbar { height: 38px; flex: none; background: #060f12; display: flex; color: #fff; font: 12px/15px "Noto Sans", sans-serif; }
.start { width: 44px; background: #04181c; display: flex; align-items: center; justify-content: center; }
.tsearch { box-sizing: border-box; width: 322px; background: #f1f1f1; border-bottom: 1px solid #aaa; display: flex; align-items: center; gap: 11px; padding-left: 11px; color: #444; font-size: 14px; }
.running { display: flex; margin-left: 2px; }
.app { width: 46px; display: flex; align-items: center; justify-content: center; position: relative; }
.app.sm { width: 45px; }
.app.run::after { content: ""; position: absolute; left: 5px; right: 4px; bottom: 0; height: 2px; background: #76b1de; }
.tray { margin-left: auto; display: flex; align-items: center; padding-right: 21px; gap: 10px; }
.tray svg:nth-child(4) { margin-left: -3px; }
.eng { margin-left: -2px; }
.clock { width: 54px; text-align: center; line-height: 16px; margin: 0 3px 0 -1px; }
.time { display: flex; justify-content: center; gap: 4px; }
.time, .date { height: 16px; white-space: nowrap; }
.date { font-size: 10px; }

.help { position: absolute; left: 1240px; top: 602px; }

.palette { position: absolute; left: 561px; top: 589px; box-sizing: border-box; width: 357px; height: 47px; background: #303030; border: 1px solid #0d0d0d; border-radius: 4px; display: flex; align-items: center; padding-left: 9px; }
.sw { box-sizing: border-box; width: 24px; height: 24px; margin-right: 14.400px; flex: none; }
.red { width: 28px; height: 28px; border: 1px solid #eee; background: #fb3636; box-shadow: inset 0 0 0 1px #444; margin-right: 17px; }
.orange { background: #f5873a; }
.yellow { background: #ff0; }
.green { background: #97cb0a; }
.blue { background: #3591e0; }
.magenta { background: #f016ef; margin-right: 10px; }
.div { width: 1px; height: 38px; background: #111; flex: none; }
.ts { font-family: "Liberation Serif", serif; color: #888; text-align: center; line-height: 46px; height: 46px; width: 33px; }
.ts.s { font-size: 21px; padding-top: 8px; margin-left: 4px; }
.ts.m { font-size: 30px; color: #fff; padding-top: 5px; }
.ts.l { font-size: 37px; }
.recorder { position: absolute; left: 561px; top: 636px; box-sizing: border-box; width: 718px; height: 46px; display: flex; border: 1px solid #0d0d0d; border-radius: 4px; background: #222; }
.rleft { width: 335px; background: #303030; border-right: 1px solid #111; display: flex; align-items: center; }
.rleft > .rp { width: 21px; display: flex; justify-content: center; }
.rtools { display: flex; align-items: center; margin: 0 3px; }
.rcell { width: 34.400px; display: flex; justify-content: center; }
.letter { color: #fff; font: 22px/24px "Noto Sans", sans-serif; }
.rsm { width: 30px; display: flex; justify-content: center; }
.rright { display: flex; align-items: center; padding-left: 18px; }
.r32 { width: 32px; display: flex; justify-content: center; }
.d1 { margin: 0 8px 0 14px; }
.timer { color: #888; font: 16px/20px "Noto Sans", sans-serif; margin-right: 10px; }
.d2 { margin: 0 2px 0 4px; }
</style>
